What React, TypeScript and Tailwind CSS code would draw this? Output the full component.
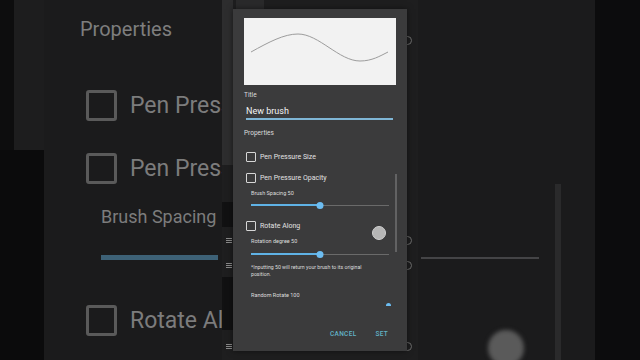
import { Fragment } from 'react'

// only the part of each label that shows beside the phone is written out
const BgCheckRow = ({ label, mt }: { label: string; mt: string }) => (
  <div className={`flex items-center ${mt} ml-[42px] h-[31px]`}>
    <div className="w-[31px] h-[31px] border-[3px] border-[#5a5a5a] rounded-[3px]" />
    <span className="ml-[13px] text-[23px] leading-[31px] text-[#7c7c7c] whitespace-nowrap">{label}</span>
  </div>
)

const CheckRow = ({ label, mt }: { label: string; mt: string }) => (
  <div className={`flex items-center h-[20px] ${mt} pl-[2px]`}>
    <div className="w-[10px] h-[10px] border-[1.5px] border-[#d6d6d6] rounded-[1px]" />
    <span className="ml-[4px] text-[7px] text-[#e2e2e2]">{label}</span>
  </div>
)

const Slider = ({ mt, value }: { mt: string; value: number }) => (
  <div className={`relative h-[12px] ${mt} ml-[7px] w-[138px] flex items-center`}>
    <div className="h-[2px] bg-[#5fb2e6]" style={{ width: `${value}%` }} />
    <div className="flex-1 h-[1px] bg-[#6a6a6a]" />
    <div
      className="absolute w-[7px] h-[7px] rounded-full bg-[#6cbdf2] -translate-x-1/2"
      style={{ left: `${value}%` }}
    />
  </div>
)

const Ring = ({ top }: { top: string }) => (
  <div className={`absolute left-[181px] ${top} w-[9px] h-[9px] rounded-full border border-[#6e6e6e]`} />
)

const Handle = ({ top }: { top: string }) => (
  <div className={`absolute left-[4px] ${top} flex flex-col gap-[1px]`}>
    {[0, 1, 2].map(i => (
      <Fragment key={i}>
        <div className="w-[6px] h-[1px] bg-[#8a8a8a]" />
      </Fragment>
    ))}
  </div>
)

export default function App() {
  return (
    <div className="relative w-[640px] h-[360px] overflow-hidden bg-[#0d0d0e] font-['Roboto',sans-serif] flex">
      {/* blurred background copy */}
      <div className="w-[44px] flex flex-col">
        <div className="ml-[14px] h-[150px] bg-[#1d1d1e]" />
        <div className="flex-1 bg-[#0b0b0c]" />
      </div>
      <div className="relative w-[551px] h-full bg-[#1b1b1c] flex flex-col">
        <div className="mt-[17px] ml-[36px] text-[20px] leading-[24px] text-[#7e7e7e]">Properties</div>
        <BgCheckRow label="Pen Press" mt="mt-[49px]" />
        <BgCheckRow label="Pen Press" mt="mt-[32px]" />
        <div className="mt-[21px] ml-[57px] whitespace-nowrap text-[18px] leading-[24px] text-[#7c7c7c]">
          Brush Spacing
        </div>
        <div className="mt-[26px] ml-[57px] flex items-center">
          <div className="w-[117px] h-[5px] bg-[#3d6176]" />
          <div className="ml-[203px] w-[118px] h-[2px] bg-[#444446]" />
        </div>
        <BgCheckRow label="Rotate Al" mt="mt-[45px]" />
        <div className="absolute left-[511px] top-[184px] w-[6px] h-[176px] bg-[#2a2a2b]" />
        <div className="absolute left-[444px] top-[330px] w-[36px] h-[36px] rounded-full bg-[#5a5a5a] blur-[2px]" />
      </div>
      <div className="flex-1 bg-[#0c0c0d]" />

      {/* phone screen */}
      <div className="absolute left-[222px] top-0 w-[196px] h-[360px] bg-[#1e1e1f]">
        <div className="absolute left-0 top-0 w-[11px] h-[165px] bg-[#2d2d2e]" />
        <div className="absolute left-0 top-[202px] w-[11px] h-[25px] bg-[#111112]" />
        <div className="absolute left-0 top-[277px] w-[11px] h-[53px] bg-[#111112]" />
        <div className="absolute left-[14px] top-0 w-[28px] h-[9px] bg-[#2a2a2b]" />
        <Handle top="top-[238px]" />
        <Handle top="top-[263px]" />
        <Handle top="top-[344px]" />
        <Ring top="top-[36px]" />
        <Ring top="top-[236px]" />
        <Ring top="top-[261px]" />
        <Ring top="top-[342px]" />

        {/* dialog */}
        <div className="absolute left-[11px] top-[9px] w-[174px] h-[342px] bg-[#3b3b3c] shadow-[0_0_6px_rgba(0,0,0,0.5)] flex flex-col pl-[11px] pr-[11px]">
          <div className="mt-[9px] w-[152px] h-[67px] bg-[#f2f2f2]">
            <svg width="152" height="67" viewBox="0 0 152 67">
              <path
                d="M7 34 C 25 24, 40 16, 54 16 C 75 16, 95 43, 116 43 C 128 43, 136 38, 144 34"
                fill="none"
                stroke="#9c9c9c"
                strokeWidth="1"
              />
            </svg>
          </div>
          <div className="mt-[5px] text-[6.5px] leading-[10px] text-[#dcdcdc]">Title</div>
          <div className="mt-[1px] ml-[2px] w-[147px] pt-[3px] border-b-2 border-[#7fb6d6] text-[9px] leading-[14px] text-[#f4f4f4]">
            New brush
          </div>
          <div className="mt-[8px] text-[6.5px] leading-[10px] text-[#dcdcdc]">Properties</div>

          <div className="relative flex flex-col">
            <CheckRow label="Pen Pressure Size" mt="mt-[9px]" />
            <CheckRow label="Pen Pressure Opacity" mt="mt-[1px]" />
            <div className="mt-[1px] ml-[7px] text-[5.5px] leading-[8px] text-[#dedede]">Brush Spacing 50</div>
            <Slider mt="mt-[2px]" value={50} />
            <CheckRow label="Rotate Along" mt="mt-[5px]" />
            <div className="mt-[1px] ml-[7px] text-[5.5px] leading-[8px] text-[#dedede]">Rotation degree 50</div>
            <Slider mt="mt-[3px]" value={50} />
            <div className="mt-[4px] ml-[7px] w-[130px] text-[5.2px] leading-[7px] text-[#dedede]">
              *Inputting 50 will return your brush to its original position.
            </div>
            <div className="mt-[13px] ml-[7px] text-[5.5px] leading-[8px] text-[#dedede]">Random Rotate 100</div>
            <div className="mt-[4px] h-[6px] flex justify-end pr-[5px]">
              <div className="w-[5px] h-[3px] rounded-t-full bg-[#6cbdf2]" />
            </div>
            <div className="absolute left-[151px] top-[36px] w-[2px] h-[78px] bg-[#626263]" />
            <div className="absolute left-[128px] top-[88px] w-[14px] h-[14px] rounded-full bg-[#c4c4c4] border border-[#e0e0e0] opacity-90" />
          </div>

          <div className="mt-[19px] h-[14px] flex justify-end items-center gap-[19px] pr-[8px] text-[6.5px] font-medium tracking-[0.3px] text-[#62b3c7]">
            <span>CANCEL</span>
            <span>SET</span>
          </div>
        </div>
      </div>
    </div>
  )
}
